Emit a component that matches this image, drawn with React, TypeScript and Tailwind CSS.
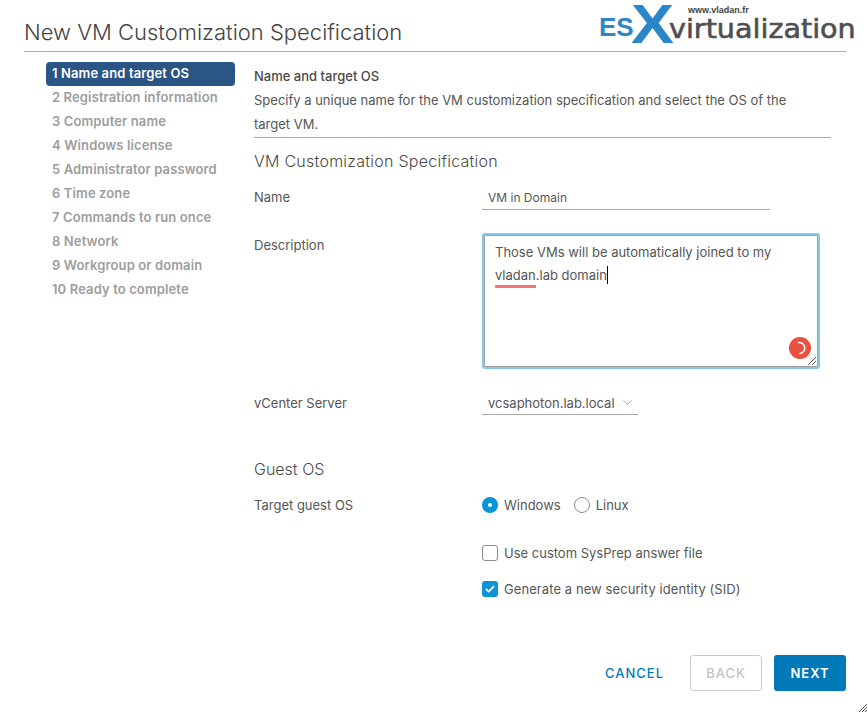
import { ChevronDown } from "lucide-react"

const steps = [
    "1 Name and target OS",
    "2 Registration information",
    "3 Computer name",
    "4 Windows license",
    "5 Administrator password",
    "6 Time zone",
    "7 Commands to run once",
    "8 Network",
    "9 Workgroup or domain",
    "10 Ready to complete"
]

const Logo = () => (
    <div className="absolute left-[599px] top-[2px] h-[46px] w-[262px] font-['Liberation_Sans',sans-serif]">
        <span className="absolute left-0 top-[9px] text-[26px] leading-[32px] font-bold text-[#2f86c6]">ES</span>
        <span className="absolute left-[32px] top-[-2px] origin-left scale-x-[1.15] text-[56px] leading-[48px] font-bold text-[#2a85c9]">X</span>
        <span className="absolute left-[89px] top-[3px] text-[9px] leading-[10px] font-bold text-[#444]">www.vladan.fr</span>
        <span className="absolute left-[70px] top-[12px] origin-left scale-x-[1.1] font-['DejaVu_Sans',sans-serif] text-[26px] leading-[30px] text-[#4f4f4f] [-webkit-text-stroke:0.6px_#4f4f4f]">virtualization</span>
    </div>
)

const Row = ({ label, className, labelClass, children }: { label: string; className?: string; labelClass?: string; children: React.ReactNode }) => (
    <div className={`flex ${className ?? ""}`}>
        <div className={`w-[228px] shrink-0 leading-[23px] ${labelClass ?? "pt-px"}`}>{label}</div>
        <div className="flex-1">{children}</div>
    </div>
)

export default function App() {
    return (
        <div className="relative flex h-[713px] w-[868px] flex-col overflow-hidden bg-white pl-[24px] pr-[22px] font-['Inter',sans-serif] text-[13px] text-[#565656]">
            <Logo />
            <h1 className="h-[52px] border-b border-[#a8a8a8] pt-[17px] text-[22px] leading-[30px] font-light text-[#444]">
                New VM Customization Specification
            </h1>

            <div className="flex flex-1">
                <nav className="ml-[22px] mt-[10px] w-[189px] shrink-0 text-[13px] font-semibold tracking-[0.12px] text-[#9d9d9d]">
                    {steps.map((s, i) => (
                        <div
                            key={s}
                            className={`h-[24px] whitespace-nowrap rounded-[4px] pl-[6px] leading-[23px] ${i === 0 ? "bg-[#2b5584] text-white" : ""}`}
                        >
                            {s}
                        </div>
                    ))}
                </nav>

                <main className="ml-[19px] mr-[15px] flex-1 pt-[12px]">
                    <div className="h-[74px] border-b border-[#a8a8a8] leading-[24px]">
                        <div className="font-medium text-[#4a4a4a]">Name and target OS</div>
                        <div className="max-w-[550px]">Specify a unique name for the VM customization specification and select the OS of the target VM.</div>
                    </div>

                    <h2 className="mt-[11px] text-[16px] leading-[24px] font-light tracking-[0.25px] text-[#4a4a4a]">VM Customization Specification</h2>

                    <Row label="Name" labelClass="pt-0" className="mt-[13px]">
                        <div className="h-[24px] w-[288px] border-b border-[#a8a8a8] pl-[6px] text-[12px] leading-[23px]">VM in Domain</div>
                    </Row>

                    <Row label="Description" className="mt-[23px]">
                        <div className="relative h-[136px] w-[338px] rounded-[3px] border-2 border-[#7fcbe9] px-[11px] py-[5px] leading-[24px] shadow-[inset_0_0_0_1px_#a0a0a0]">
                            <div>Those VMs will be automatically joined to my</div>
                            <div className="flex">
                                <span className="h-[24px] border-b-[3px] border-[#f7727a] leading-[22px]">vladan</span>
                                <span className="leading-[22px]">.lab domain</span>
                                <span className="mt-[2px] h-[18px] w-px bg-black" />
                            </div>
                            <div className="absolute bottom-[8px] right-[7px] flex size-[22px] items-center justify-center rounded-full bg-[#e8503f]">
                                <svg width="14" height="14" viewBox="0 0 14 14" fill="none">
                                    <path d="M5.5 1.5a5.5 5.5 0 0 1 1.5 11" stroke="#fff" strokeWidth="1.5" strokeLinecap="round" />
                                </svg>
                            </div>
                            <svg className="absolute bottom-[1px] right-[1px]" width="10" height="10" viewBox="0 0 10 10" fill="none">
                                <path d="M1 9 9 1M5 9 9 5" stroke="#555" strokeWidth="1" />
                            </svg>
                        </div>
                    </Row>

                    <Row label="vCenter Server" className="mt-[22px]">
                        <div className="flex h-[24px] w-[156px] items-center border-b border-[#a8a8a8] pl-[6px]">
                            <span className="mt-[2px]">vcsaphoton.lab.local</span>
                            <ChevronDown className="ml-[5px] text-[#8a8a8a]" size={15} strokeWidth={1.25} />
                        </div>
                    </Row>

                    <h2 className="mt-[42px] text-[16px] leading-[24px] font-light text-[#4a4a4a]">Guest OS</h2>

                    <Row label="Target guest OS" className="mt-[12px]">
                        <div className="flex h-[24px] items-center">
                            <span className="flex size-[16px] items-center justify-center rounded-full bg-[#0b95d6]">
                                <span className="size-[4px] rounded-full bg-white" />
                            </span>
                            <span className="ml-[6px] mt-[2px]">Windows</span>
                            <span className="ml-[13px] size-[16px] rounded-full border border-[#8c8c8c]" />
                            <span className="ml-[6px] mt-[2px]">Linux</span>
                        </div>
                    </Row>

                    <div className="ml-[228px] mt-[24px] flex h-[24px] items-center">
                        <span className="size-[16px] rounded-[3px] border border-[#8c8c8c]" />
                        <span className="ml-[6px] mt-[2px]">Use custom SysPrep answer file</span>
                    </div>
                    <div className="ml-[228px] mt-[12px] flex h-[24px] items-center">
                        <span className="flex size-[16px] items-center justify-center rounded-[3px] bg-[#0b95d6]">
                            <svg width="10" height="8" viewBox="0 0 10 8" fill="none">
                                <path d="M1 4l2.8 2.6L9 1.2" stroke="#fff" strokeWidth="1.8" />
                            </svg>
                        </span>
                        <span className="ml-[6px] mt-[2px] tracking-[0.08px]">Generate a new security identity (SID)</span>
                    </div>
                </main>
            </div>

            <footer className="mb-[22px] flex h-[36px] items-center justify-end text-[13px] font-medium tracking-[1px]">
                <button className="h-full pr-[26px] pt-[2px] text-[#0079b8]">CANCEL</button>
                <button className="h-full w-[72px] rounded-[3px] border border-[#cccccc] pt-[2px] text-[#c4c4c4]">BACK</button>
                <button className="ml-[12px] h-full w-[72px] rounded-[3px] bg-[#0079b8] pt-[2px] font-semibold text-white">NEXT</button>
            </footer>

            <svg className="absolute bottom-[1px] right-[1px]" width="8" height="8" viewBox="0 0 8 8" fill="none">
                <path d="M0 8 8 0M3 8 8 3M6 8 8 6" stroke="#555" strokeWidth="1" />
            </svg>
        </div>
    )
}
